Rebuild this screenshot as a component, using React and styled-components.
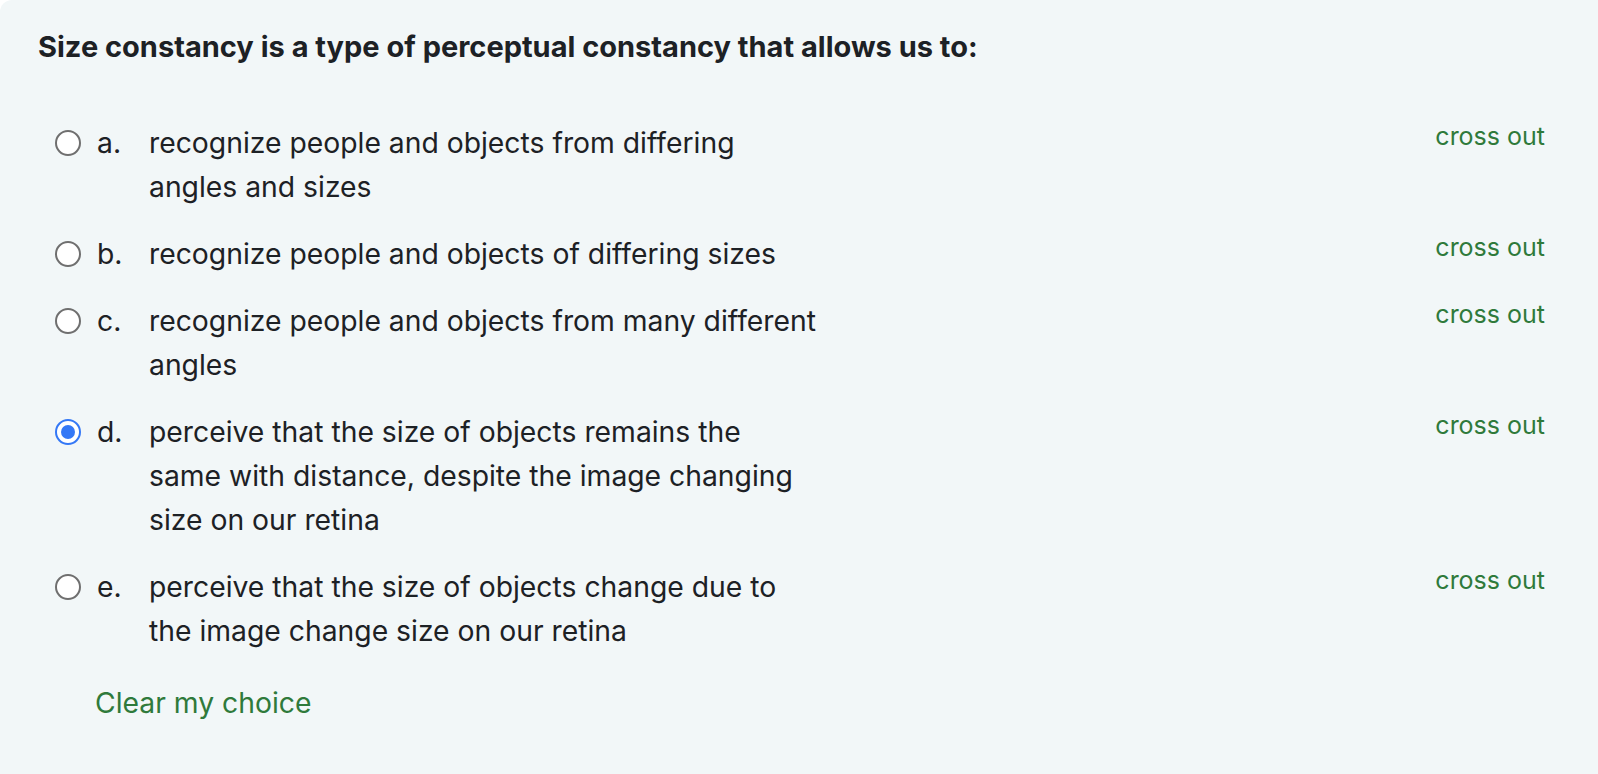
import styled, { createGlobalStyle } from "styled-components";

const GlobalStyle = createGlobalStyle`
  html, body {
    margin: 0;
    padding: 0;
    background: #ffffff;
  }
  body {
    font-family: Inter, "Noto Sans", "Liberation Sans", sans-serif;
    color: #1d2125;
  }
`;

const Panel = styled.div({
  boxSizing: "border-box",
  minHeight: "774px",
  background: "#f2f7f8",
  borderTopLeftRadius: "12px",
  padding: "27px 53px 40px 38px",
});

const Title = styled.h2({
  margin: 0,
  fontSize: "29px",
  lineHeight: "40px",
  fontWeight: 700,
  color: "#1d2125",
});

const Options = styled.div({
  display: "flex",
  flexDirection: "column",
  gap: "23px",
  marginTop: "54px",
});

const Row = styled.div({
  display: "flex",
  alignItems: "flex-start",
});

const RadioWrap = styled.div({
  width: "59px",
  height: "44px",
  display: "flex",
  alignItems: "center",
  paddingLeft: "17px",
  boxSizing: "border-box",
  flexShrink: 0,
});

const Radio = styled.span`
  box-sizing: border-box;
  width: 26px;
  height: 26px;
  border-radius: 50%;
  background: #ffffff;
  border: ${(p) => (p.$checked ? "2.5px solid #3478f6" : "2px solid #6f6f6f")};
  display: flex;
  align-items: center;
  justify-content: center;
  &::after {
    content: "";
    display: ${(p) => (p.$checked ? "block" : "none")};
    width: 14px;
    height: 14px;
    border-radius: 50%;
    background: #3478f6;
  }
`;

const Letter = styled.span({
  width: "52px",
  flexShrink: 0,
  fontSize: "28.3px",
  lineHeight: "44px",
});

const Answer = styled.span({
  fontSize: "28.3px",
  lineHeight: "44px",
  whiteSpace: "nowrap",
});

const CrossOut = styled.a({
  marginLeft: "auto",
  fontSize: "25px",
  lineHeight: "30px",
  color: "#2f7a3b",
  textDecoration: "none",
  cursor: "pointer",
});

const Clear = styled.a({
  display: "inline-block",
  marginTop: "28px",
  marginLeft: "57px",
  fontSize: "28.3px",
  lineHeight: "44px",
  color: "#2f7a3b",
  textDecoration: "none",
  cursor: "pointer",
});

const answers = [
  { key: "a", lines: ["recognize people and objects from differing", "angles and sizes"] },
  { key: "b", lines: ["recognize people and objects of differing sizes"] },
  { key: "c", lines: ["recognize people and objects from many different", "angles"] },
  {
    key: "d",
    lines: [
      "perceive that the size of objects remains the",
      "same with distance, despite the image changing",
      "size on our retina",
    ],
  },
  {
    key: "e",
    lines: ["perceive that the size of objects change due to", "the image change size on our retina"],
  },
];

export default function App() {
  const selected = "d";
  return (
    <>
      <GlobalStyle />
      <Panel>
        <Title>Size constancy is a type of perceptual constancy that allows us to:</Title>
        <Options>
          {answers.map((a) => (
            <Row key={a.key}>
              <RadioWrap>
                <Radio $checked={a.key === selected} />
              </RadioWrap>
              <Letter>{a.key}.</Letter>
              <Answer>
                {a.lines.map((line, i) => (
                  <span key={i}>
                    {i > 0 && <br />}
                    {line}
                  </span>
                ))}
              </Answer>
              <CrossOut>cross out</CrossOut>
            </Row>
          ))}
        </Options>
        <Clear>Clear my choice</Clear>
      </Panel>
    </>
  );
}
